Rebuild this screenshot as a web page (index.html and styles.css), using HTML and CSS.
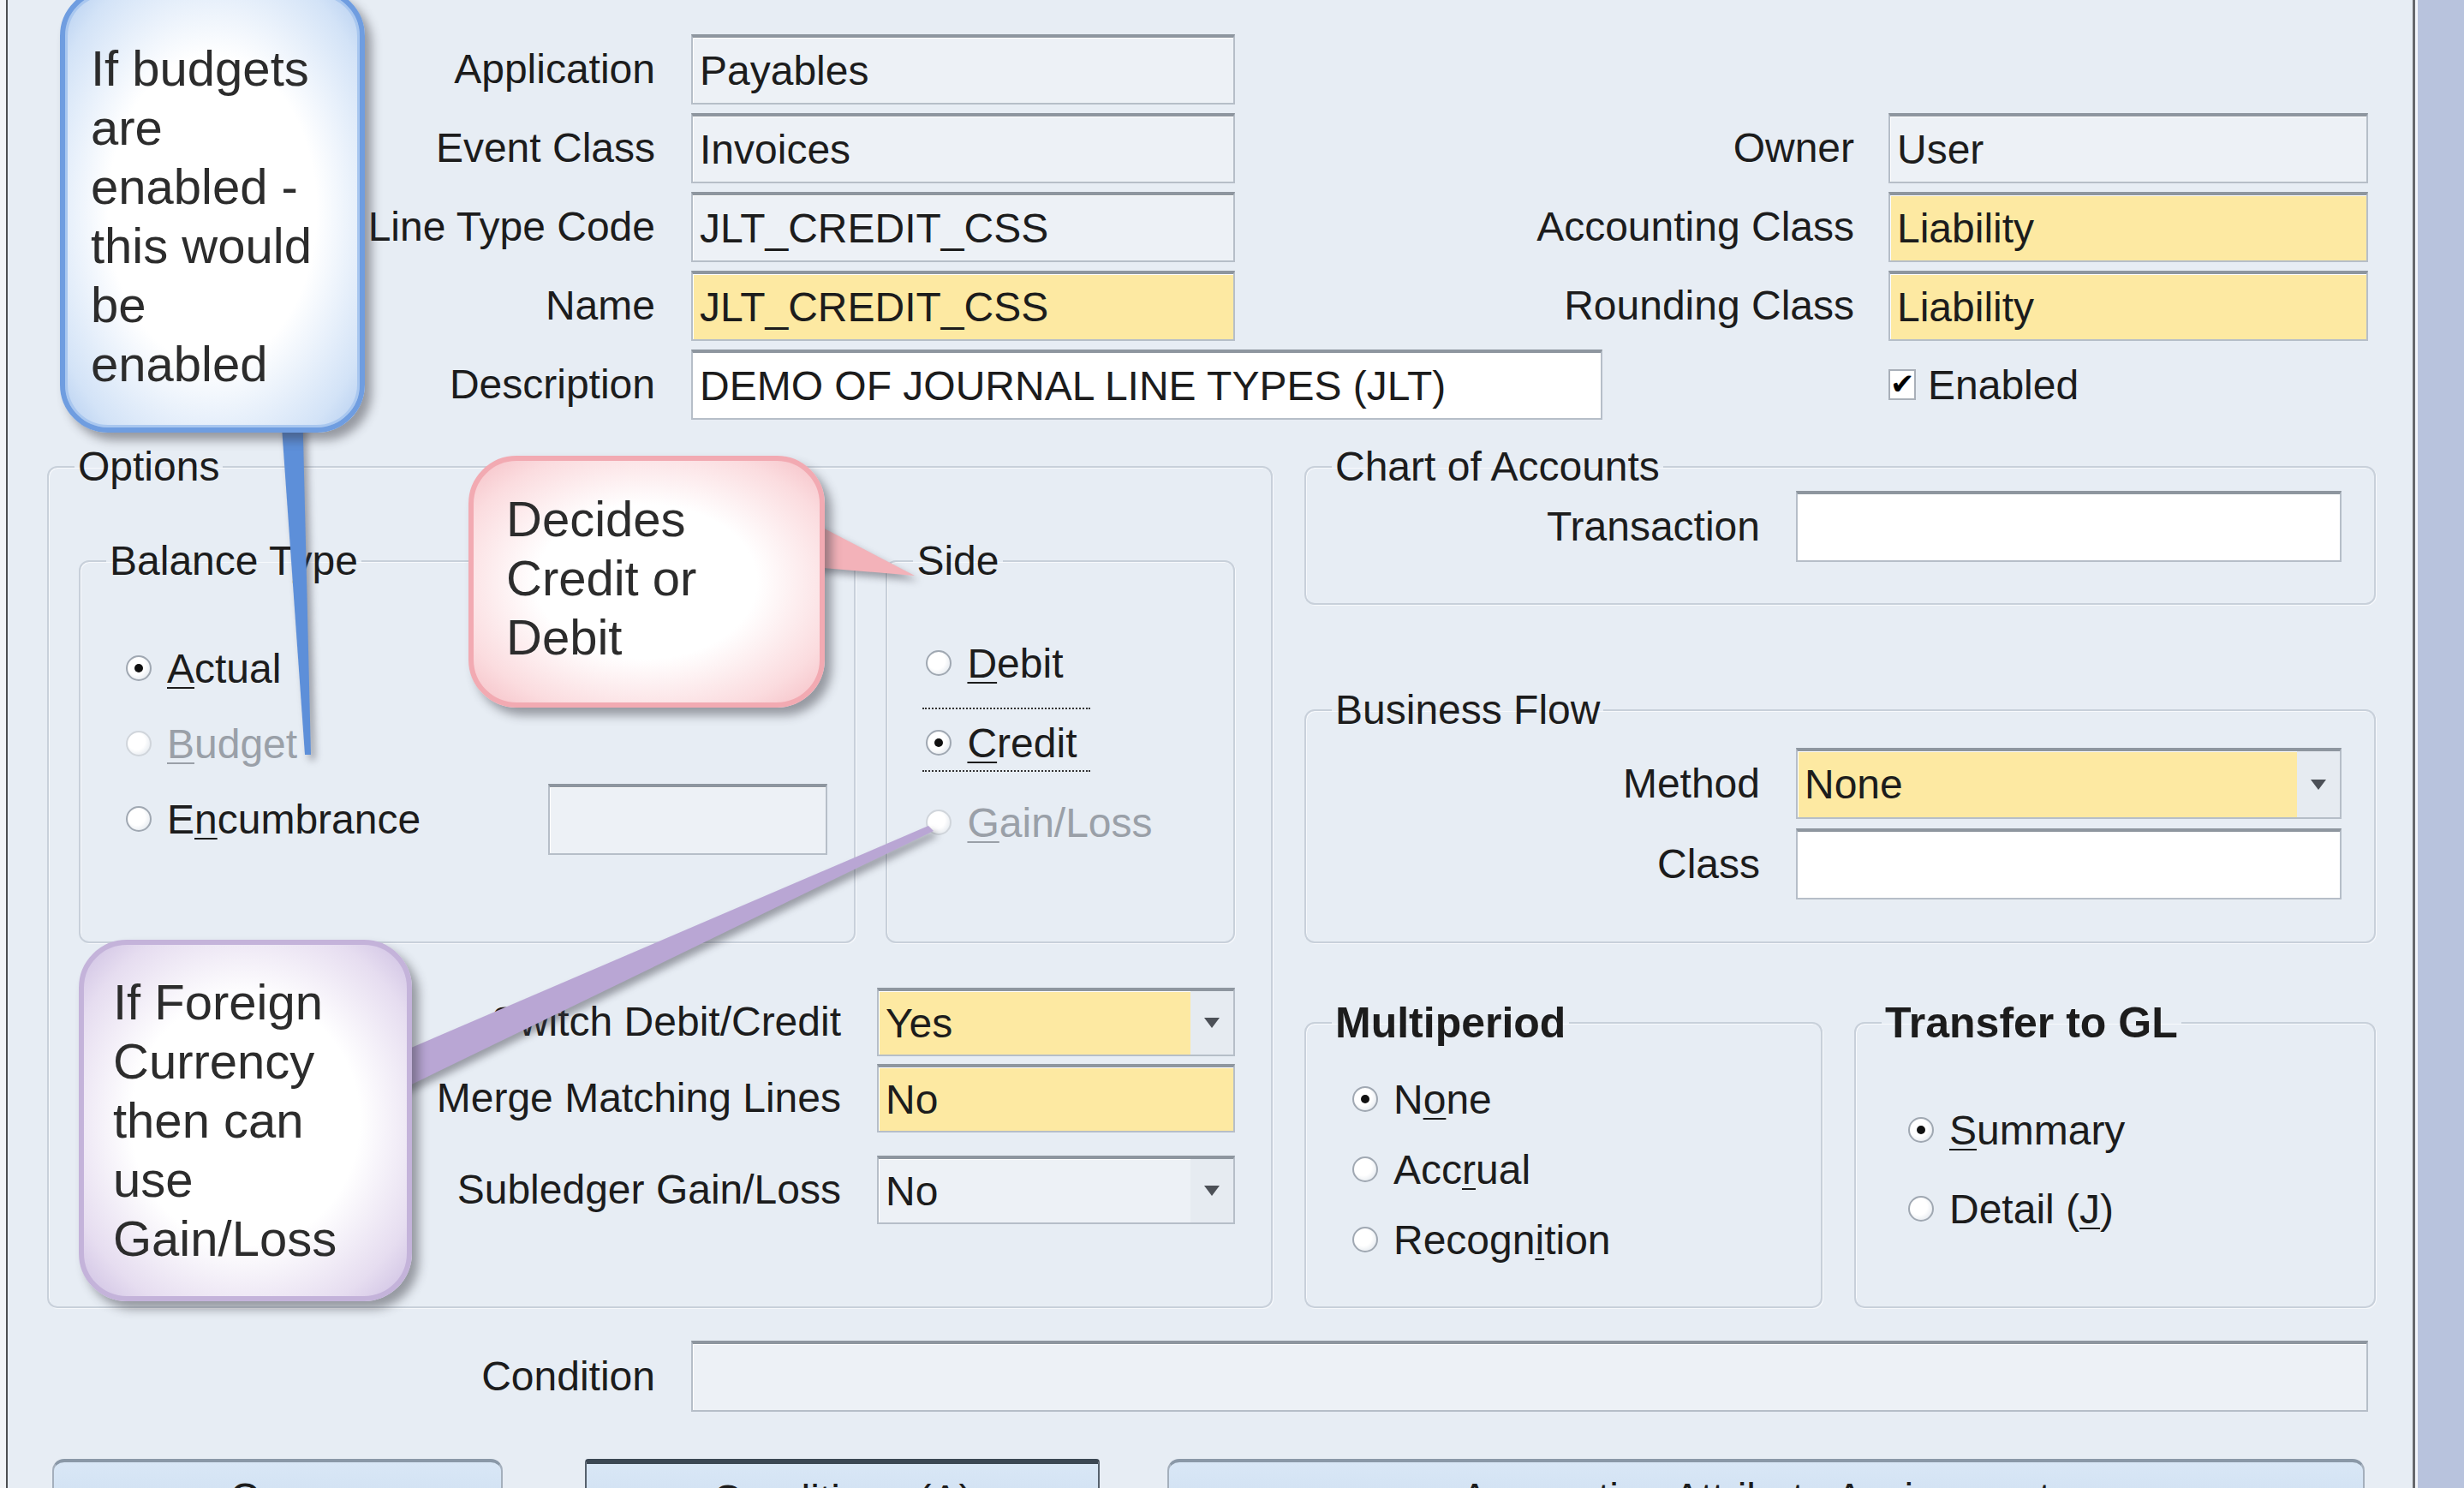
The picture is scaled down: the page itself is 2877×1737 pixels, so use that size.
FILE: index.html
```html
<!DOCTYPE html>
<html lang="en">
<head>
    <meta charset="UTF-8">
    <title>Journal Line Types</title>
    <link rel="stylesheet" href="styles.css">
</head>
<body>
    <div class="screen">
        <div class="edge"></div>
        <div class="window">
            <!-- Header fields -->
            <div class="header-grid">
                <label class="lbl c1">Application</label>
                <div class="field c2">Payables</div>

                <label class="lbl c1">Event Class</label>
                <div class="field c2">Invoices</div>
                <label class="lbl c-rl">Owner</label>
                <div class="field c5">User</div>

                <label class="lbl c1">Line Type Code</label>
                <div class="field c2">JLT_CREDIT_CSS</div>
                <label class="lbl c-rl">Accounting Class</label>
                <div class="field yellow c5">Liability</div>

                <label class="lbl c1">Name</label>
                <div class="field yellow c2">JLT_CREDIT_CSS</div>
                <label class="lbl c-rl">Rounding Class</label>
                <div class="field yellow c5">Liability</div>

                <label class="lbl c1">Description</label>
                <div class="field white c-desc">DEMO OF JOURNAL LINE TYPES (JLT)</div>
                <div class="checkbox c5"><span class="box">✔</span>Enabled</div>
            </div>

            <div class="middle">
                <fieldset class="group options">
                    <legend>Options</legend>
                    <div class="opt-row">
                        <fieldset class="group balance">
                            <legend>Balance Type</legend>
                            <div class="radio on"><span class="dot"></span><span><u>A</u>ctual</span></div>
                            <div class="radio off"><span class="dot"></span><span><u>B</u>udget</span></div>
                            <div class="radio"><span class="dot"></span><span>E<u>n</u>cumbrance</span><div class="field enc"></div></div>
                        </fieldset>
                        <fieldset class="group side">
                            <legend>Side</legend>
                            <div class="radio"><span class="dot"></span><span><u>D</u>ebit</span></div>
                            <div class="radio on focus"><span class="dot"></span><span><u>C</u>redit</span></div>
                            <div class="radio off last"><span class="dot"></span><span><u>G</u>ain/Loss</span></div>
                        </fieldset>
                    </div>
                    <div class="opt-fields">
                        <label class="lbl">Switch Debit/Credit</label>
                        <div class="field yellow select">Yes<span class="arrow"></span></div>
                        <label class="lbl">Merge Matching Lines</label>
                        <div class="field yellow merge">No</div>
                        <label class="lbl">Subledger Gain/Loss</label>
                        <div class="field select subledger">No<span class="arrow"></span></div>
                    </div>
                </fieldset>

                <div class="right-col">
                    <fieldset class="group coa">
                        <legend>Chart of Accounts</legend>
                        <div class="pair-grid">
                            <label class="lbl">Transaction</label>
                            <div class="field white"></div>
                        </div>
                    </fieldset>
                    <fieldset class="group flow">
                        <legend>Business Flow</legend>
                        <div class="pair-grid">
                            <label class="lbl">Method</label>
                            <div class="field yellow select">None<span class="arrow"></span></div>
                            <label class="lbl">Class</label>
                            <div class="field white"></div>
                        </div>
                    </fieldset>
                    <div class="lower-row">
                        <fieldset class="group multiperiod">
                            <legend class="bold">Multiperiod</legend>
                            <div class="radio on"><span class="dot"></span><span>N<u>o</u>ne</span></div>
                            <div class="radio"><span class="dot"></span><span>Acc<u>r</u>ual</span></div>
                            <div class="radio"><span class="dot"></span><span>Recogn<u>i</u>tion</span></div>
                        </fieldset>
                        <fieldset class="group transfer">
                            <legend class="bold">Transfer to GL</legend>
                            <div class="radio on"><span class="dot"></span><span><u>S</u>ummary</span></div>
                            <div class="radio"><span class="dot"></span><span>Detail (<u>J</u>)</span></div>
                        </fieldset>
                    </div>
                </div>
            </div>

            <div class="condition-row">
                <label class="lbl">Condition</label>
                <div class="field"></div>
            </div>

            <div class="buttons">
                <div class="btn b-copy">Copy</div>
                <div class="btn b-cond">Conditions (A)</div>
                <div class="btn b-attr">Accounting Attribute Assignments</div>
            </div>

            <!-- Callout annotations -->
            <svg class="tails" width="2808" height="1737">
                <polygon class="tail-blue" points="318,470 344,470 354,881 347,881"/>
                <polygon class="tail-pink" points="940,610 1059,672 940,662"/>
                <polygon class="tail-purple" points="455,1230 1075,964 1081,970 455,1274"/>
            </svg>
            <div class="callout blue">If budgets<br>are<br>enabled -<br>this would<br>be<br>enabled</div>
            <div class="callout pink">Decides<br>Credit or<br>Debit</div>
            <div class="callout purple">If Foreign<br>Currency<br>then can<br>use<br>Gain/Loss</div>
        </div>
        <div class="desktop"></div>
    </div>
</body>
</html>
```

FILE: styles.css
```css
body {
    margin: 0;
    overflow: hidden;
    font-family: 'Liberation Sans', Arial, sans-serif;
    color: #1c1c1c;
}
.screen {
    display: flex;
    height: 1737px;
}
.edge {
    width: 7px;
    background: #f2f4f7;
}
.window {
    position: relative;
    width: 2813px;
    height: 1737px;
    box-sizing: border-box;
    border-left: 2px solid #4d4f52;
    border-right: 3px solid #66686c;
    background: #e7edf4;
    padding-top: 40px;
    overflow: hidden;
}
.desktop {
    flex: 1;
    background: #b8c3dd;
    border-left: 3px solid #f3f5fa;
}

/* Labels and fields */
.lbl {
    font-size: 48px;
    line-height: 56px;
    text-align: right;
    white-space: nowrap;
    align-self: center;
}
.field {
    height: 82px;
    box-sizing: border-box;
    border: 2px solid #b6bec8;
    border-top: 4px solid #8e969f;
    background: #edf1f6;
    box-shadow: inset 1px 1px 0 #fff;
    font-size: 48px;
    padding-left: 8px;
    display: flex;
    align-items: center;
    white-space: nowrap;
    overflow: hidden;
}
.field.yellow {
    background: #fde9a2;
}
.field.white {
    background: #fff;
}
.field.select {
    padding-right: 0;
}
.arrow {
    margin-left: auto;
    width: 50px;
    align-self: stretch;
    background: #e6ebf1;
    display: flex;
    align-items: center;
    justify-content: center;
}
.arrow::before {
    content: '';
    border-left: 9px solid transparent;
    border-right: 9px solid transparent;
    border-top: 12px solid #4c5057;
}

/* Header grid */
.header-grid {
    display: grid;
    grid-template-columns: 798px 635px 429px 334px 560px;
    grid-auto-rows: 82px;
    row-gap: 10px;
}
.c1 { grid-column: 1; padding-right: 42px; }
.c2 { grid-column: 2; }
.c-rl { grid-column: 3 / 5; padding-right: 40px; }
.c5 { grid-column: 5; }
.c-desc { grid-column: 2 / 4; }
.checkbox {
    display: flex;
    align-items: center;
    gap: 14px;
    font-size: 48px;
}
.checkbox .box {
    width: 32px;
    height: 36px;
    box-sizing: border-box;
    border: 2px solid #a9b0b9;
    background: #fff;
    font-family: 'DejaVu Sans', sans-serif;
    font-size: 34px;
    line-height: 30px;
    font-weight: bold;
    color: #000;
    text-align: center;
    overflow: visible;
}

/* Group boxes */
.group {
    margin: 0;
    padding: 0;
    min-width: 0;
    box-sizing: border-box;
    border: 2px solid #c8d0da;
    border-radius: 12px;
    box-shadow: inset 1px 1px 0 #f7f9fc, 1px 1px 0 #f7f9fc;
}
.group legend {
    font-size: 48px;
    line-height: 56px;
    padding: 0 4px;
    margin-left: 30px;
}
.group legend.bold {
    font-weight: bold;
    font-size: 50px;
}
.middle {
    display: flex;
    gap: 37px;
    margin-top: 27px;
    padding-left: 46px;
}
.options {
    width: 1431px;
    height: 1010px;
    padding: 54px 42px 0 35px;
}
.options > legend {
    margin-left: -5px;
}
.opt-row {
    display: flex;
    gap: 35px;
}
.balance {
    width: 913px;
    height: 474px;
    padding: 67px 31px 0 53px;
}
.balance > legend {
    margin-left: -23px;
}
.side {
    width: 410px;
    height: 474px;
    padding: 61px 0 0 45px;
}
.side > legend {
    margin-left: -15px;
}

/* Radios */
.radio {
    display: flex;
    align-items: center;
    gap: 18px;
    height: 60px;
    font-size: 48px;
    white-space: nowrap;
}
.radio u {
    text-decoration-thickness: 2px;
    text-underline-offset: 5px;
}
.dot {
    position: relative;
    flex: none;
    width: 30px;
    height: 30px;
    box-sizing: border-box;
    border-radius: 50%;
    border: 2px solid #a0a8b2;
    background: radial-gradient(circle at 40% 40%, #fff 45%, #d8dfe7);
}
.radio.on .dot::after {
    content: '';
    position: absolute;
    left: 8px;
    top: 8px;
    width: 10px;
    height: 10px;
    border-radius: 50%;
    background: #111;
}
.radio.off {
    color: #9aa0a8;
}
.radio.off .dot {
    border-color: #d0d5db;
}
.balance .radio + .radio {
    margin-top: 28px;
}
.enc {
    margin-left: auto;
    width: 326px;
    height: 83px;
}
.side .radio.focus {
    width: fit-content;
    margin: 22px 0 0 -4px;
    padding: 9px 16px 2px 4px;
    border-top: 2px dotted #333;
    border-bottom: 2px dotted #333;
}
.side .radio.last {
    margin-top: 29px;
}
.opt-fields {
    display: grid;
    grid-template-columns: 1fr 418px;
    column-gap: 42px;
    margin-top: 52px;
}
.opt-fields .field {
    height: 80px;
}
.opt-fields .merge {
    margin-top: 9px;
}
.opt-fields .subledger {
    margin-top: 27px;
}
.opt-fields .lbl:nth-of-type(2) {
    margin-top: 9px;
}
.opt-fields .lbl:nth-of-type(3) {
    margin-top: 27px;
}

/* Right column */
.right-col {
    width: 1251px;
}
.pair-grid {
    display: grid;
    grid-template-columns: 1fr 637px;
    column-gap: 42px;
    padding-right: 38px;
    row-gap: 11px;
}
.pair-grid .field {
    height: 83px;
}
.coa {
    height: 189px;
}
.flow {
    height: 300px;
    margin-top: 95px;
}
.flow .pair-grid {
    margin-top: 16px;
}
.lower-row {
    display: flex;
    gap: 37px;
    margin-top: 65px;
}
.multiperiod {
    width: 605px;
    height: 361px;
    padding: 31px 0 0 54px;
}
.multiperiod > legend {
    margin-left: -24px;
}
.multiperiod .radio + .radio {
    margin-top: 22px;
}
.transfer {
    width: 609px;
    height: 361px;
    padding: 67px 0 0 61px;
}
.transfer > legend {
    margin-left: -31px;
}
.transfer .radio + .radio {
    margin-top: 32px;
}

/* Condition and buttons */
.condition-row {
    display: grid;
    grid-template-columns: 798px 1958px;
    margin-top: 38px;
}
.condition-row .lbl {
    padding-right: 42px;
}
.condition-row .field {
    height: 83px;
}
.buttons {
    display: flex;
    margin-top: 55px;
    padding-left: 52px;
}
.btn {
    height: 100px;
    box-sizing: border-box;
    padding-top: 14px;
    border: 2px solid #a4afbc;
    border-top: 4px solid #8a98a7;
    border-radius: 14px 14px 0 0;
    background: linear-gradient(#d9e7f6, #c8dbef);
    font-size: 48px;
    line-height: 56px;
    text-align: center;
    white-space: nowrap;
}
.b-copy { width: 526px; }
.b-cond {
    width: 601px;
    margin-left: 96px;
    border-color: #56616d;
    border-top: 6px solid #3b4753;
    border-radius: 4px 4px 0 0;
}
.b-attr {
    width: 1398px;
    margin-left: 79px;
}

/* Callouts */
.tails {
    position: absolute;
    left: 0;
    top: 0;
    filter: drop-shadow(5px 6px 4px rgba(60, 60, 70, 0.45));
}
.tail-blue { fill: #5d8fd9; }
.tail-pink { fill: #f3b2b9; }
.tail-purple { fill: #b9a6d4; }
.callout {
    position: absolute;
    box-sizing: border-box;
    font-size: 58px;
    line-height: 69px;
    color: #2c2c2c;
    border-radius: 56px;
    white-space: nowrap;
}
.callout.blue {
    left: 61px;
    top: -14px;
    width: 356px;
    height: 519px;
    padding: 53px 0 0 30px;
    border: 6px solid #6f9de0;
    background: radial-gradient(ellipse at 50% 50%, #fff 50%, #d3e3f7 85%, #b3cdf0);
    box-shadow: inset 0 0 0 3px #a9c7ef, 8px 9px 12px rgba(50, 50, 60, 0.45);
}
.callout.pink {
    left: 538px;
    top: 532px;
    width: 416px;
    height: 294px;
    padding: 33px 0 0 38px;
    border: 6px solid #f2aab2;
    background: radial-gradient(ellipse at 50% 50%, #fff 45%, #fbdcdf 80%, #f5c0c6);
    box-shadow: 8px 9px 12px rgba(50, 50, 60, 0.45);
}
.callout.purple {
    left: 83px;
    top: 1097px;
    width: 389px;
    height: 422px;
    padding: 32px 0 0 34px;
    border: 6px solid #c4b3da;
    background: radial-gradient(ellipse at 50% 50%, #fff 50%, #e6ddf0 82%, #cdbfe2);
    box-shadow: 8px 9px 12px rgba(50, 50, 60, 0.45);
}
```
